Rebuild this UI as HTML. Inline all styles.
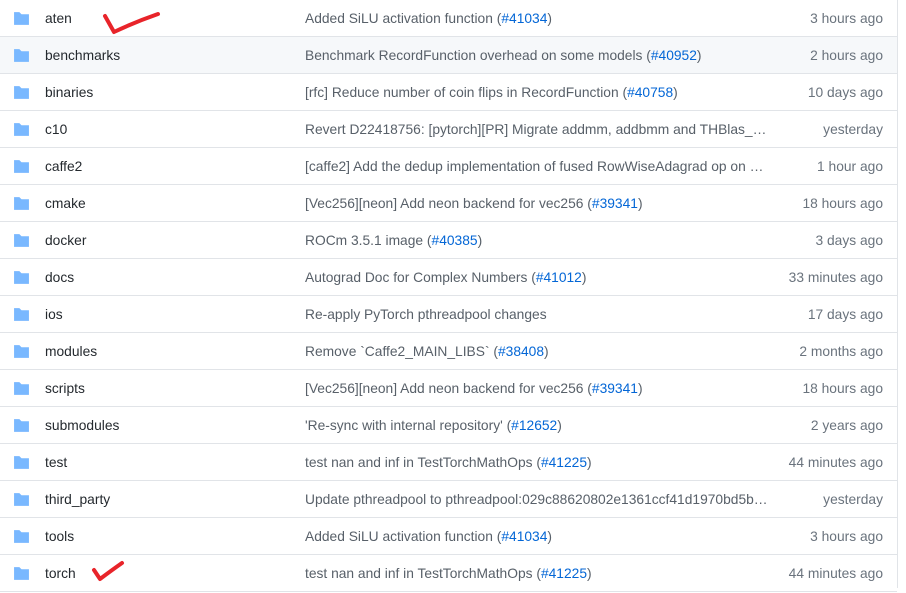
<!DOCTYPE html>
<html><head><style>
body{margin:0;width:906px;height:588px;background:#fff;font-family:"Liberation Sans",sans-serif;font-size:13.8px;color:#24292e;overflow:hidden;position:relative}
.wrap{position:absolute;left:0;top:0;width:897px;border-right:1px solid #e1e4e8;height:588px}
.row{height:36px;border-bottom:1px solid #e1e4e8;position:relative;line-height:38px}
.row.h{background:#f6f8fa}
.ic{position:absolute;left:13px;top:11px}
.n{position:absolute;left:45px}
.m{position:absolute;left:305px;color:#586069;width:463px;white-space:nowrap;overflow:hidden;text-overflow:ellipsis}
.m a{color:#0366d6;text-decoration:none}
.t{position:absolute;right:14px;color:#6a737d}
svg.ck{position:absolute;left:0;top:0}
</style></head><body>
<div class="wrap">
<div class="row"><svg class="ic" width="17" height="15" viewBox="0 0 16 14"><path d="M1 1h5l2 2h7v10H1z" fill="#79b8ff"/></svg><span class="n">aten</span><span class="m">Added SiLU activation function (<a>#41034</a>)</span><span class="t">3 hours ago</span></div>
<div class="row h"><svg class="ic" width="17" height="15" viewBox="0 0 16 14"><path d="M1 1h5l2 2h7v10H1z" fill="#79b8ff"/></svg><span class="n">benchmarks</span><span class="m">Benchmark RecordFunction overhead on some models (<a>#40952</a>)</span><span class="t">2 hours ago</span></div>
<div class="row"><svg class="ic" width="17" height="15" viewBox="0 0 16 14"><path d="M1 1h5l2 2h7v10H1z" fill="#79b8ff"/></svg><span class="n">binaries</span><span class="m">[rfc] Reduce number of coin flips in RecordFunction (<a>#40758</a>)</span><span class="t">10 days ago</span></div>
<div class="row"><svg class="ic" width="17" height="15" viewBox="0 0 16 14"><path d="M1 1h5l2 2h7v10H1z" fill="#79b8ff"/></svg><span class="n">c10</span><span class="m">Revert D22418756: [pytorch][PR] Migrate addmm, addbmm and THBlas_gemm to ATen</span><span class="t">yesterday</span></div>
<div class="row"><svg class="ic" width="17" height="15" viewBox="0 0 16 14"><path d="M1 1h5l2 2h7v10H1z" fill="#79b8ff"/></svg><span class="n">caffe2</span><span class="m">[caffe2] Add the dedup implementation of fused RowWiseAdagrad op on GPUs</span><span class="t">1 hour ago</span></div>
<div class="row"><svg class="ic" width="17" height="15" viewBox="0 0 16 14"><path d="M1 1h5l2 2h7v10H1z" fill="#79b8ff"/></svg><span class="n">cmake</span><span class="m">[Vec256][neon] Add neon backend for vec256 (<a>#39341</a>)</span><span class="t">18 hours ago</span></div>
<div class="row"><svg class="ic" width="17" height="15" viewBox="0 0 16 14"><path d="M1 1h5l2 2h7v10H1z" fill="#79b8ff"/></svg><span class="n">docker</span><span class="m">ROCm 3.5.1 image (<a>#40385</a>)</span><span class="t">3 days ago</span></div>
<div class="row"><svg class="ic" width="17" height="15" viewBox="0 0 16 14"><path d="M1 1h5l2 2h7v10H1z" fill="#79b8ff"/></svg><span class="n">docs</span><span class="m">Autograd Doc for Complex Numbers (<a>#41012</a>)</span><span class="t">33 minutes ago</span></div>
<div class="row"><svg class="ic" width="17" height="15" viewBox="0 0 16 14"><path d="M1 1h5l2 2h7v10H1z" fill="#79b8ff"/></svg><span class="n">ios</span><span class="m">Re-apply PyTorch pthreadpool changes</span><span class="t">17 days ago</span></div>
<div class="row"><svg class="ic" width="17" height="15" viewBox="0 0 16 14"><path d="M1 1h5l2 2h7v10H1z" fill="#79b8ff"/></svg><span class="n">modules</span><span class="m">Remove `Caffe2_MAIN_LIBS` (<a>#38408</a>)</span><span class="t">2 months ago</span></div>
<div class="row"><svg class="ic" width="17" height="15" viewBox="0 0 16 14"><path d="M1 1h5l2 2h7v10H1z" fill="#79b8ff"/></svg><span class="n">scripts</span><span class="m">[Vec256][neon] Add neon backend for vec256 (<a>#39341</a>)</span><span class="t">18 hours ago</span></div>
<div class="row"><svg class="ic" width="17" height="15" viewBox="0 0 16 14"><path d="M1 1h5l2 2h7v10H1z" fill="#79b8ff"/></svg><span class="n">submodules</span><span class="m">'Re-sync with internal repository' (<a>#12652</a>)</span><span class="t">2 years ago</span></div>
<div class="row"><svg class="ic" width="17" height="15" viewBox="0 0 16 14"><path d="M1 1h5l2 2h7v10H1z" fill="#79b8ff"/></svg><span class="n">test</span><span class="m">test nan and inf in TestTorchMathOps (<a>#41225</a>)</span><span class="t">44 minutes ago</span></div>
<div class="row"><svg class="ic" width="17" height="15" viewBox="0 0 16 14"><path d="M1 1h5l2 2h7v10H1z" fill="#79b8ff"/></svg><span class="n">third_party</span><span class="m">Update pthreadpool to pthreadpool:029c88620802e1361ccf41d1970bd5b07fd6b7bb</span><span class="t">yesterday</span></div>
<div class="row"><svg class="ic" width="17" height="15" viewBox="0 0 16 14"><path d="M1 1h5l2 2h7v10H1z" fill="#79b8ff"/></svg><span class="n">tools</span><span class="m">Added SiLU activation function (<a>#41034</a>)</span><span class="t">3 hours ago</span></div>
<div class="row"><svg class="ic" width="17" height="15" viewBox="0 0 16 14"><path d="M1 1h5l2 2h7v10H1z" fill="#79b8ff"/></svg><span class="n">torch</span><span class="m">test nan and inf in TestTorchMathOps (<a>#41225</a>)</span><span class="t">44 minutes ago</span></div>
</div>
<svg class="ck" width="906" height="588"><path d="M105 16 L114 32 Q135 22 158 14" fill="none" stroke="#e8242a" stroke-width="4" stroke-linecap="round" stroke-linejoin="round"/><path d="M94 570 L100 579 Q112 570 122 563" fill="none" stroke="#e8242a" stroke-width="4" stroke-linecap="round" stroke-linejoin="round"/></svg>
</body></html>
